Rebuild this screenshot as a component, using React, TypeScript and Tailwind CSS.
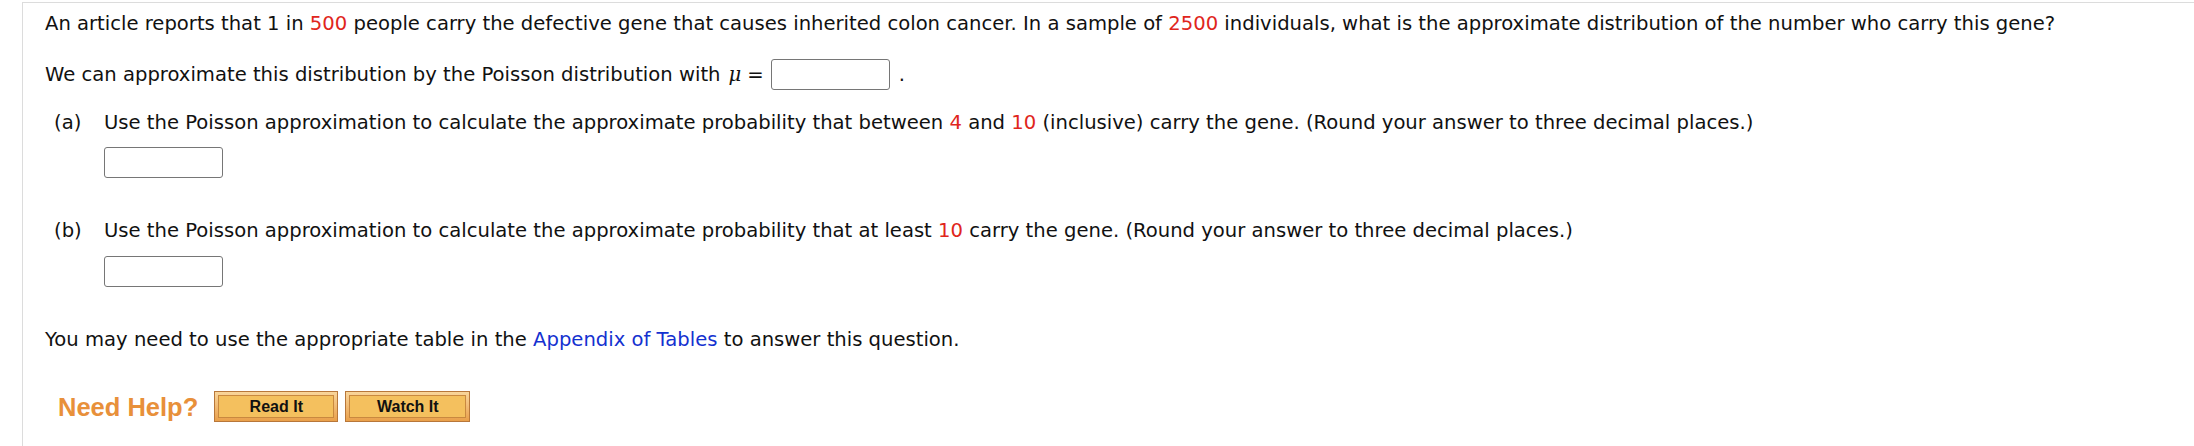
import React from 'react';

const Red: React.FC<{ children: React.ReactNode }> = ({ children }) => (
  <span className="text-[#e0261c]">{children}</span>
);

const AnswerBox: React.FC = () => (
  <input
    type="text"
    className="h-[31px] w-[119px] rounded-[3px] border border-[#767676] bg-white outline-none"
  />
);

const HelpButton: React.FC<{ label: string; width: string }> = ({ label, width }) => (
  <button
    className={`h-[31px] ${width} border border-[#b8773a] bg-gradient-to-b from-[#f9d59a] to-[#e9a04a] p-[3px]`}
  >
    <div className="flex h-full w-full items-center justify-center border border-[#c9893f] bg-[#f4c05e] font-['Liberation_Sans',Arial,sans-serif] text-[16px] font-bold text-[#111]">
      {label}
    </div>
  </button>
);

export default function App() {
  return (
    <div className="min-h-[446px] bg-white font-['DejaVu_Sans',Verdana,sans-serif] text-[19.6px] leading-[24px] text-[#111]">
      <div className="mt-[2px] ml-[22px] min-h-[444px] border-t border-l border-[#dcdcdc] pl-[22px] pt-[9px]">
        <p>
          An article reports that 1 in <Red>500</Red> people carry the defective gene that causes
          inherited colon cancer. In a sample of <Red>2500</Red> individuals, what is the approximate
          distribution of the number who carry this gene?
        </p>

        <div className="mt-[23px] flex h-[31px] items-center">
          <span>We can approximate this distribution by the Poisson distribution with</span>
          <span className="ml-[8px] font-['DejaVu_Serif',serif] italic">μ</span>
          <span className="ml-[6px] mr-[7px]">=</span>
          <AnswerBox />
          <span className="ml-[9px]">.</span>
        </div>

        <div className="mt-[21px] flex pl-[9px]">
          <span className="w-[50px]">(a)</span>
          <div>
            <p>
              Use the Poisson approximation to calculate the approximate probability that between{' '}
              <Red>4</Red> and <Red>10</Red> (inclusive) carry the gene. (Round your answer to three
              decimal places.)
            </p>
            <div className="mt-[12px] leading-none">
              <AnswerBox />
            </div>
          </div>
        </div>

        <div className="mt-[41px] flex pl-[9px]">
          <span className="w-[50px]">(b)</span>
          <div>
            <p>
              Use the Poisson approximation to calculate the approximate probability that at least{' '}
              <Red>10</Red> carry the gene. (Round your answer to three decimal places.)
            </p>
            <div className="mt-[13px] leading-none">
              <AnswerBox />
            </div>
          </div>
        </div>

        <p className="mt-[41px]">
          You may need to use the appropriate table in the{' '}
          <a className="text-[#1431d0]" href="#">
            Appendix of Tables
          </a>{' '}
          to answer this question.
        </p>

        <div className="mt-[39px] flex items-center pl-[13px]">
          <span className="font-['Liberation_Sans',Arial,sans-serif] text-[25.5px] font-bold text-[#e8903a]">
            Need Help?
          </span>
          <div className="ml-[16px] flex gap-[7px]">
            <HelpButton label="Read It" width="w-[124px]" />
            <HelpButton label="Watch It" width="w-[125px]" />
          </div>
        </div>
      </div>
    </div>
  );
}
